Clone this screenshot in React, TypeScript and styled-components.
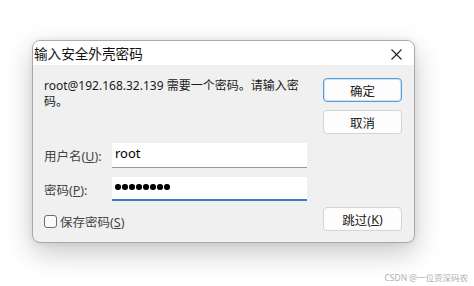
import * as React from "react";
import styled, { createGlobalStyle } from "styled-components";

const GlobalStyle = createGlobalStyle`
  html, body {
    margin: 0;
    padding: 0;
    background: #ffffff;
    font-family: "Noto Sans", "Noto Sans CJK SC", sans-serif;
  }
  body {
    width: 474px;
    height: 286px;
    overflow: hidden;
    position: relative;
  }
`;

const Page = styled.div`
  padding: 40px 0 0 32px;
`;

const Dialog = styled.div`
  width: 383px;
  height: 203px;
  box-sizing: border-box;
  border: 1px solid #a9a9a9;
  border-radius: 8px;
  overflow: hidden;
  background: #f0f0f0;
  box-shadow: 0 10px 28px rgba(0, 0, 0, 0.22), 0 0 6px rgba(0, 0, 0, 0.08);
  display: flex;
  flex-direction: column;
`;

const TitleBar = styled.div`
  height: 26px;
  background: #ffffff;
  display: flex;
  align-items: center;
  justify-content: space-between;
  padding: 0 12px 0 1px;
`;

const Title = styled.span`
  font-family: "Noto Sans CJK SC", sans-serif;
  font-size: 13.6px;
  color: #111;
  line-height: 1;
  margin-top: 1px;
`;

const CloseButton = styled.div`
  width: 12px;
  height: 12px;
  display: flex;
  align-items: center;
  justify-content: center;
  margin-top: 2px;
`;

const Body = styled.div`
  flex: 1;
  display: grid;
  grid-template-columns: minmax(0, 1fr) 79px;
  column-gap: 16px;
  padding: 13px 12px 11px 11px;
`;

const LeftColumn = styled.div`
  display: flex;
  flex-direction: column;
  min-width: 0;
`;

const Message = styled.p`
  margin: 0;
  font-size: 12px;
  line-height: 16px;
  color: #1a1a1a;
  font-family: "Noto Sans", "Noto Sans CJK SC", sans-serif;
`;

const Fields = styled.div`
  margin-top: 33px;
  display: flex;
  flex-direction: column;
  gap: 9px;
`;

const FieldRow = styled.div`
  display: flex;
  align-items: center;
`;

const Label = styled.label`
  width: 68px;
  font-size: 12.5px;
  color: #444;
  font-family: "Noto Sans", "Noto Sans CJK SC", sans-serif;
`;

const Input = styled.div<{ $focused?: boolean }>`
  width: 192px;
  height: ${(p) => (p.$focused ? "22px" : "24px")};
  background: #ffffff;
  border-bottom: ${(p) => (p.$focused ? "2px solid #3b7cc4" : "1px solid #9a9a9a")};
  display: flex;
  align-items: center;
  padding-left: 3px;
  box-sizing: content-box;
  font-size: 13px;
  color: #000;
`;

const InputText = styled.span`
  margin-top: -4px;
`;

const Dots = styled.span`
  display: flex;
  gap: 1.5px;
  margin-top: -2px;
`;

const Dot = styled.span`
  width: 5.5px;
  height: 5.5px;
  border-radius: 50%;
  background: #000;
`;

const CheckRow = styled.div`
  margin-top: 11px;
  display: flex;
  align-items: center;
  gap: 3px;
  font-size: 12.5px;
  color: #444;
`;

const CheckBox = styled.span`
  width: 11px;
  height: 11px;
  border: 1px solid #6d6d6d;
  border-radius: 3px;
  background: #fafafa;
`;

const RightColumn = styled.div`
  display: flex;
  flex-direction: column;
  gap: 8px;
`;

const Button = styled.div<{ $default?: boolean }>`
  height: 24px;
  flex-shrink: 0;
  box-sizing: border-box;
  border: 1px solid ${(p) => (p.$default ? "#5d9ad6" : "#d3d3d3")};
  box-shadow: ${(p) => (p.$default ? "inset 0 0 0 1px #cfe3f6" : "none")};
  border-radius: 4px;
  background: #fdfdfd;
  display: flex;
  align-items: center;
  justify-content: center;
  font-size: 12.5px;
  color: #222;
  font-family: "Noto Sans", "Noto Sans CJK SC", sans-serif;
`;

const Spacer = styled.div`
  flex: 1;
`;

const Watermark = styled.div`
  position: absolute;
  right: 6px;
  bottom: 3px;
  font-size: 8.5px;
  color: #b0b0b0;
  font-family: "Noto Sans", "Noto Sans CJK SC", sans-serif;
`;

const App = () => {
  return (
    <>
      <GlobalStyle />
      <Page>
        <Dialog>
          <TitleBar>
            <Title>输入安全外壳密码</Title>
            <CloseButton>
              <svg width="11" height="11" viewBox="0 0 11 11">
                <path d="M0.5 0.5 L10.5 10.5 M10.5 0.5 L0.5 10.5" stroke="#222" strokeWidth="1.1" />
              </svg>
            </CloseButton>
          </TitleBar>
          <Body>
            <LeftColumn>
              <Message>
                root@192.168.32.139 需要一个密码。请输入密
                <br />
                码。
              </Message>
              <Fields>
                <FieldRow>
                  <Label>
                    用户名(<u>U</u>):
                  </Label>
                  <Input>
                    <InputText>root</InputText>
                  </Input>
                </FieldRow>
                <FieldRow>
                  <Label>
                    密码(<u>P</u>):
                  </Label>
                  <Input $focused>
                    <Dots>
                      {Array.from({ length: 8 }).map((_, i) => (
                        <Dot key={i} />
                      ))}
                    </Dots>
                  </Input>
                </FieldRow>
              </Fields>
              <CheckRow>
                <CheckBox />
                <span>
                  保存密码(<u>S</u>)
                </span>
              </CheckRow>
            </LeftColumn>
            <RightColumn>
              <Button $default>确定</Button>
              <Button>取消</Button>
              <Spacer />
              <Button>
                跳过(<u>K</u>)
              </Button>
            </RightColumn>
          </Body>
        </Dialog>
      </Page>
      <Watermark>CSDN @一位资深码农</Watermark>
    </>
  );
};

export default App;
